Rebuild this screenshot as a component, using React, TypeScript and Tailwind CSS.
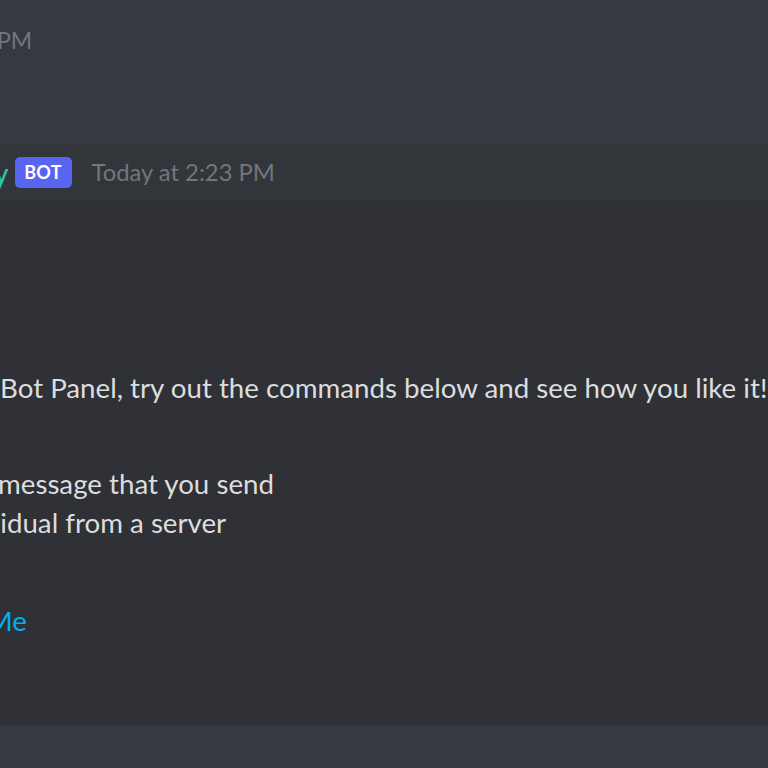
import React from "react";

function Line({ prefix, text, shift = "ml-0", color = "text-[#dcddde]" }: { prefix: string; text: string; shift?: string; color?: string }) {
  return (
    <div className={`flex whitespace-nowrap h-[39px] leading-[39px] ${color}`}>
      <span className="w-0 flex justify-end">{prefix}</span>
      <span className={shift}>{text}</span>
    </div>
  );
}

export default function App() {
  return (
    <div
      className="w-[768px] h-[768px] overflow-hidden flex flex-col bg-[#36393f]"
      style={{ fontFamily: 'Lato, "Open Sans", sans-serif' }}
    >
      <div className="h-[145px] shrink-0 bg-[#36393f]">
        <div className="mt-[26px] flex whitespace-nowrap h-[28px] leading-[28px] text-[23px] text-[#72767d]">
          <span className="w-0 flex justify-end">Today at 2:21 </span>
          <span className="-ml-[3px]">PM</span>
        </div>
      </div>
      <div className="h-[55px] shrink-0 bg-[#323539] flex items-center whitespace-nowrap">
        <div className="flex items-center">
          <span className="w-0 flex justify-end text-[28px] font-medium text-[#2cc4b0]">Happ</span>
          <span className="-ml-[6px] text-[28px] font-medium text-[#2cc4b0] leading-[28px]">y</span>
        </div>
        <span className="ml-[6px] h-[31px] w-[57px] rounded-[5px] bg-[#5865f2] text-white text-[18px] font-bold flex items-center justify-center tracking-[0.3px]">
          BOT
        </span>
        <span className="ml-[20px] text-[23.8px] text-[#72767d]">Today at 2:23 PM</span>
      </div>
      <div className="flex-1 bg-[#2f3136] text-[27.7px] pt-[168px]">
        <Line prefix="Welcome to the" text=" Bot Panel, try out the commands below and see how you like it!" />
        <div className="mt-[57px]">
          <Line prefix="!purge — Deletes a " text="message that you send" shift="-ml-[2px]" />
        </div>
        <Line prefix="!kick — Kicks an indi" text="vidual from a server" shift="-ml-[14px]" />
        <div className="mt-[59px]">
          <Line prefix="Invite " text="Me" shift="-ml-[13px]" color="text-[#00aff4]" />
        </div>
      </div>
      <div className="h-[43px] shrink-0 bg-[#36393f]" />
    </div>
  );
}
